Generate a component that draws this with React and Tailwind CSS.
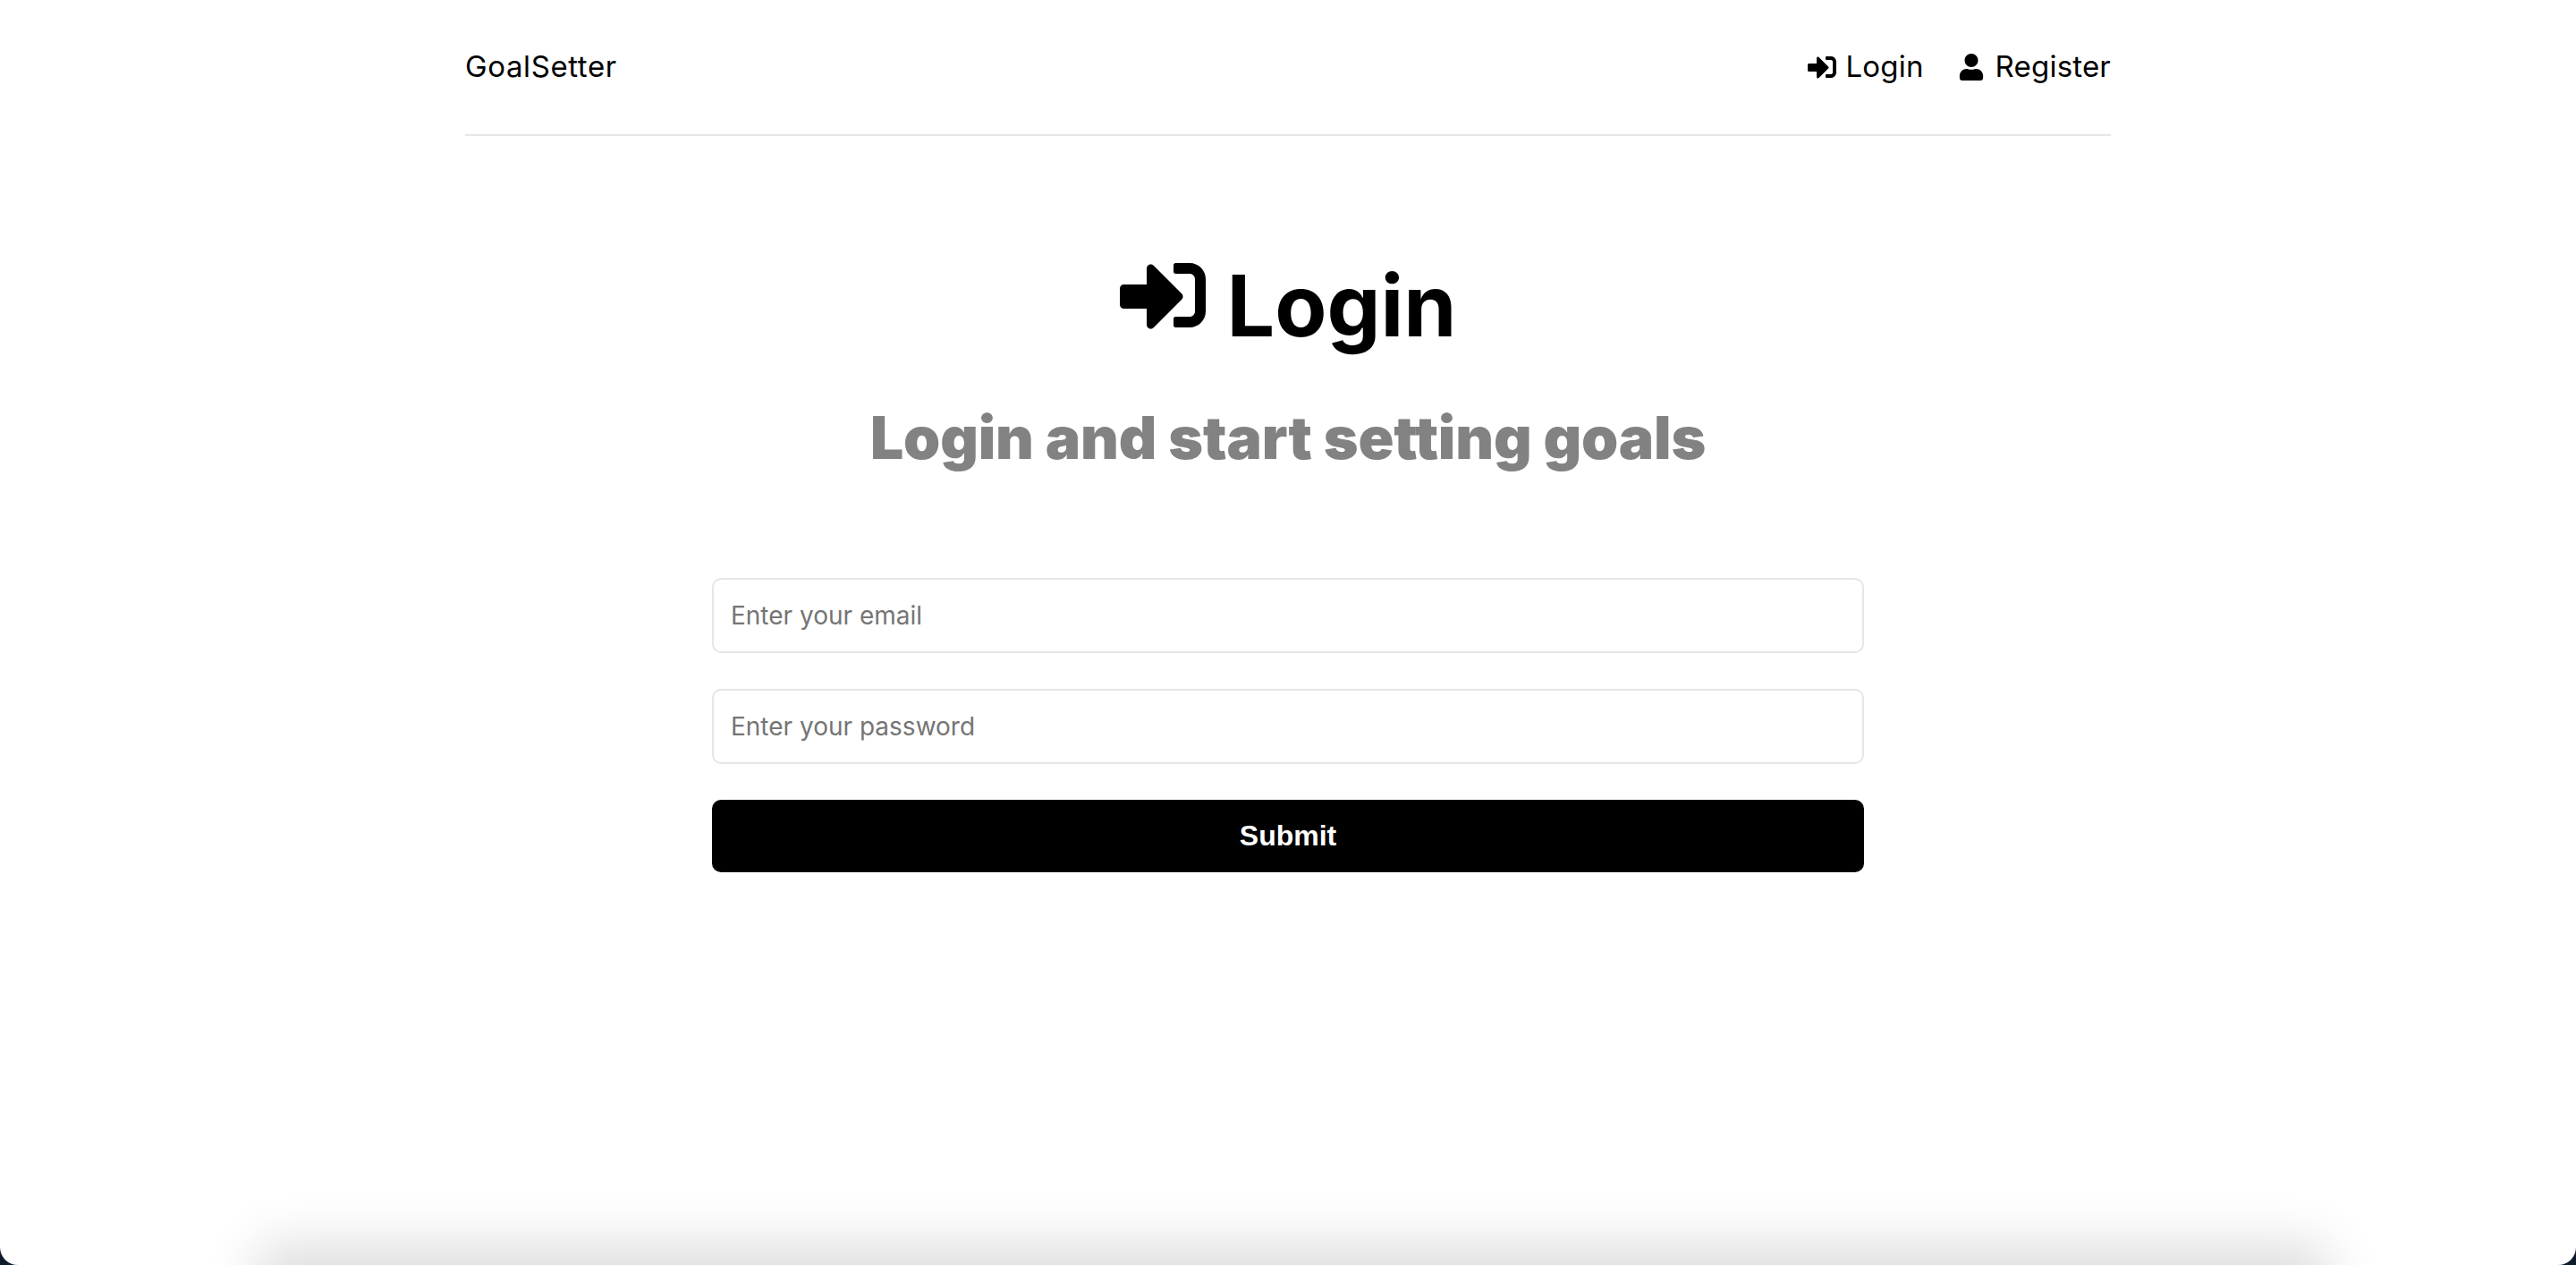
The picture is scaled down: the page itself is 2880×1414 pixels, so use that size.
import { FaSignInAlt, FaUser } from "react-icons/fa";

const font = "font-['Inter','Noto_Sans',sans-serif]";

export default function App() {
  return (
    <div className={`relative h-[1414px] overflow-hidden bg-[#0d1b2a] ${font}`}>
      <div className="relative h-full overflow-hidden rounded-b-[20px] bg-white text-black">
        {/* window shadow peeking in at the bottom */}
        <div className="absolute left-[310px] right-[300px] top-[1414px] h-20 shadow-[0_0_60px_22px_rgba(0,0,0,0.14)]" />

        <div className="mx-auto w-[1840px] text-center">
          <header className="mb-[123px] flex h-[152px] items-center justify-between border-b-2 border-[#e6e6e6]">
            <div className="text-[33px] tracking-[0.6px]">GoalSetter</div>
            <ul className="flex items-center gap-[38px] text-[33px] tracking-[0.2px]">
              <li className="flex items-center gap-[10px]">
                <FaSignInAlt className="size-[32px]" />
                <span>Login</span>
              </li>
              <li className="flex items-center gap-[12px]">
                <FaUser className="size-[30px]" />
                <span>Register</span>
              </li>
            </ul>
          </header>

          <section className="mb-[112px]">
            <h1 className="flex items-center justify-center gap-[24px] text-[95px] leading-[134px] font-bold">
              <FaSignInAlt className="mb-[25px] size-[96px]" />
              <span>Login</span>
            </h1>
            <p className="mt-[35px] text-[66px] leading-[90px] font-black tracking-[-0.15px] text-[#828282]">
              Login and start setting goals
            </p>
          </section>

          <form className="mx-auto flex w-[1288px] flex-col gap-[40px]">
            <input
              type="email"
              placeholder="Enter your email"
              className="h-[84px] w-full rounded-[10px] border-2 border-[#e6e6e6] px-[19px] text-[28px] outline-none placeholder:text-[#757575]"
            />
            <input
              type="password"
              placeholder="Enter your password"
              className="h-[84px] w-full rounded-[10px] border-2 border-[#e6e6e6] px-[19px] text-[28px] outline-none placeholder:text-[#757575]"
            />
            <button
              type="button"
              className="h-[81px] w-full rounded-[10px] bg-black pb-[2px] font-['Liberation_Sans',Arial,sans-serif] text-[32px] font-bold text-white"
            >
              Submit
            </button>
          </form>
        </div>
      </div>
    </div>
  );
}
